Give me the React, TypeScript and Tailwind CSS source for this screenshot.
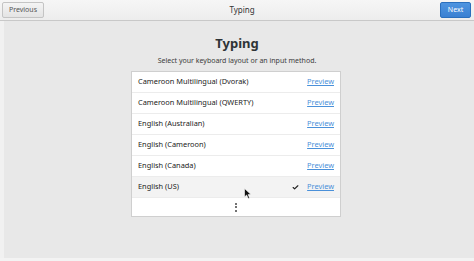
import { Check } from "lucide-react";

const layouts = [
  "Cameroon Multilingual (Dvorak)",
  "Cameroon Multilingual (QWERTY)",
  "English (Australian)",
  "English (Cameroon)",
  "English (Canada)",
  "English (US)",
];

export default function App() {
  return (
    <div className="w-[474px] h-[261px] flex flex-col bg-[#e8e8e8] overflow-hidden font-['Noto_Sans',sans-serif] text-[#2e3436]">
      {/* header bar */}
      <div className="h-[21px] shrink-0 flex items-center justify-between px-[2px] bg-gradient-to-b from-[#f6f6f6] to-[#ededed] border-b border-[#c8c8c8]">
        <button className="h-[16px] w-[42px] rounded-[2px] border border-[#c4c4c4] bg-gradient-to-b from-[#f4f4f4] to-[#e4e4e4] text-[7px] text-[#555]">
          Previous
        </button>
        <div className="text-[8px] text-[#333]">Typing</div>
        <button className="h-[16px] w-[31px] mr-[1px] rounded-[2px] border border-[#2a6fbd] bg-gradient-to-b from-[#4d94e0] to-[#3a80d2] text-[7px] text-white">
          Next
        </button>
      </div>

      <div className="flex-1 flex border-l-[4px] border-[#f1f1f1]">
        <div className="flex-1 flex flex-col items-center pt-[14px]">
          <h1 className="text-[13px] font-bold leading-[16px] text-[#2e3436] mr-[4px]">Typing</h1>
          <p className="mt-[5px] text-[7px] leading-[9px] text-[#3c3c3c] mr-[4px]">
            Select your keyboard layout or an input method.
          </p>

          <div className="mt-[6px] w-[210px] mr-[6px] bg-white border border-[#cfcfcf] relative">
            {layouts.map((name, i) => (
              <div
                key={name}
                className={`h-[21px] flex items-center pl-[6px] pr-[6px] text-[7.4px] border-b border-[#ececec] ${
                  i === 5 ? "bg-[#f3f3f3]" : ""
                }`}
              >
                <span className="flex-1 text-[#222]">{name}</span>
                {i === 5 && <Check className="w-[7px] h-[7px] mr-[8px] text-[#222]" strokeWidth={4} />}
                <span className="text-[#4a90d9] underline">Preview</span>
              </div>
            ))}
            <div className="h-[18px] flex flex-col items-center justify-center gap-[1.5px]">
              <span className="w-[2px] h-[2px] rounded-full bg-[#444]" />
              <span className="w-[2px] h-[2px] rounded-full bg-[#444]" />
              <span className="w-[2px] h-[2px] rounded-full bg-[#444]" />
            </div>

            {/* mouse pointer */}
            <svg className="absolute left-[112px] top-[116px]" width="8" height="11" viewBox="0 0 8 11">
              <path d="M0.5 0.5 L0.5 9 L2.6 7 L4.2 10.5 L5.6 9.9 L4.1 6.6 L7 6.6 Z" fill="#111" stroke="#fff" strokeWidth="0.6" />
            </svg>
          </div>
        </div>
      </div>
      <div className="h-[3px] shrink-0 bg-[#f3f3f3]" />
    </div>
  );
}
